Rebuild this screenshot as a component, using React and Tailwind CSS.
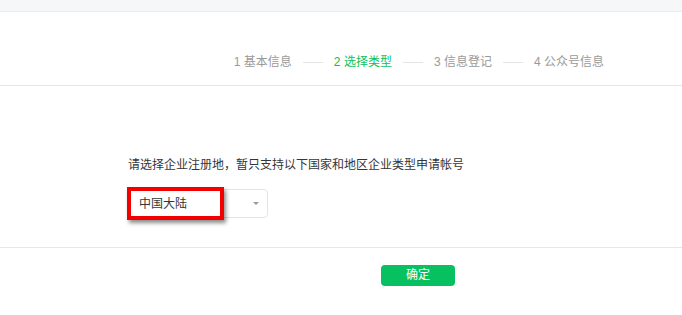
import React from "react";

const steps = [
  { no: 1, label: "基本信息" },
  { no: 2, label: "选择类型", active: true },
  { no: 3, label: "信息登记" },
  { no: 4, label: "公众号信息" },
];

const App = () => {
  return (
    <div className="w-[682px] h-[315px] overflow-hidden bg-white font-['Liberation_Sans','Noto_Sans_CJK_SC',sans-serif]">
      <div className="h-[12px] bg-[#f6f7f9] border-b border-[#ececec]" />

      {/* steps */}
      <div className="h-[74px] border-b border-[#e7e7e7] flex justify-end pr-[78px] pt-[42px]">
        <div className="flex items-center h-4 text-[12px] leading-4">
          {steps.map((s, i) => (
            <React.Fragment key={s.no}>
              {i > 0 && <div className="w-[20px] h-px bg-[#e5e5e5] mx-[11px]" />}
              <span className={s.active ? "text-[#07c160]" : "text-[#9a9a9a]"}>
                {s.no} {s.label}
              </span>
            </React.Fragment>
          ))}
        </div>
      </div>

      {/* body */}
      <div className="h-[162px] border-b border-[#e7e7e7] pl-[128px] pt-[71px]">
        <p className="text-[12px] leading-4 text-[#353535]">
          请选择企业注册地，暂只支持以下国家和地区企业类型申请帐号
        </p>
        <div className="relative mt-[16px] w-[140px] h-[29px] border border-[#e4e4e4] rounded-sm flex items-center justify-between pl-[10px] pr-[8px]">
          <span className="text-[12px] text-[#353535]">中国大陆</span>
          <span className="w-0 h-0 border-l-[3px] border-r-[3px] border-t-[3px] border-l-transparent border-r-transparent border-t-[#9a9a9a]" />
          <div className="absolute left-[-2px] top-[-3px] w-[97px] h-[33px] border-[4px] border-[#f20000] shadow-[2px_3px_4px_rgba(0,0,0,0.45)]" />
        </div>
      </div>

      {/* footer */}
      <div className="pt-[14px] pl-[381px]">
        <button className="w-[74px] h-[21px] bg-[#07c160] rounded-sm text-white text-[12px] leading-[21px] text-center">
          确定
        </button>
      </div>
    </div>
  );
};

export default App;
